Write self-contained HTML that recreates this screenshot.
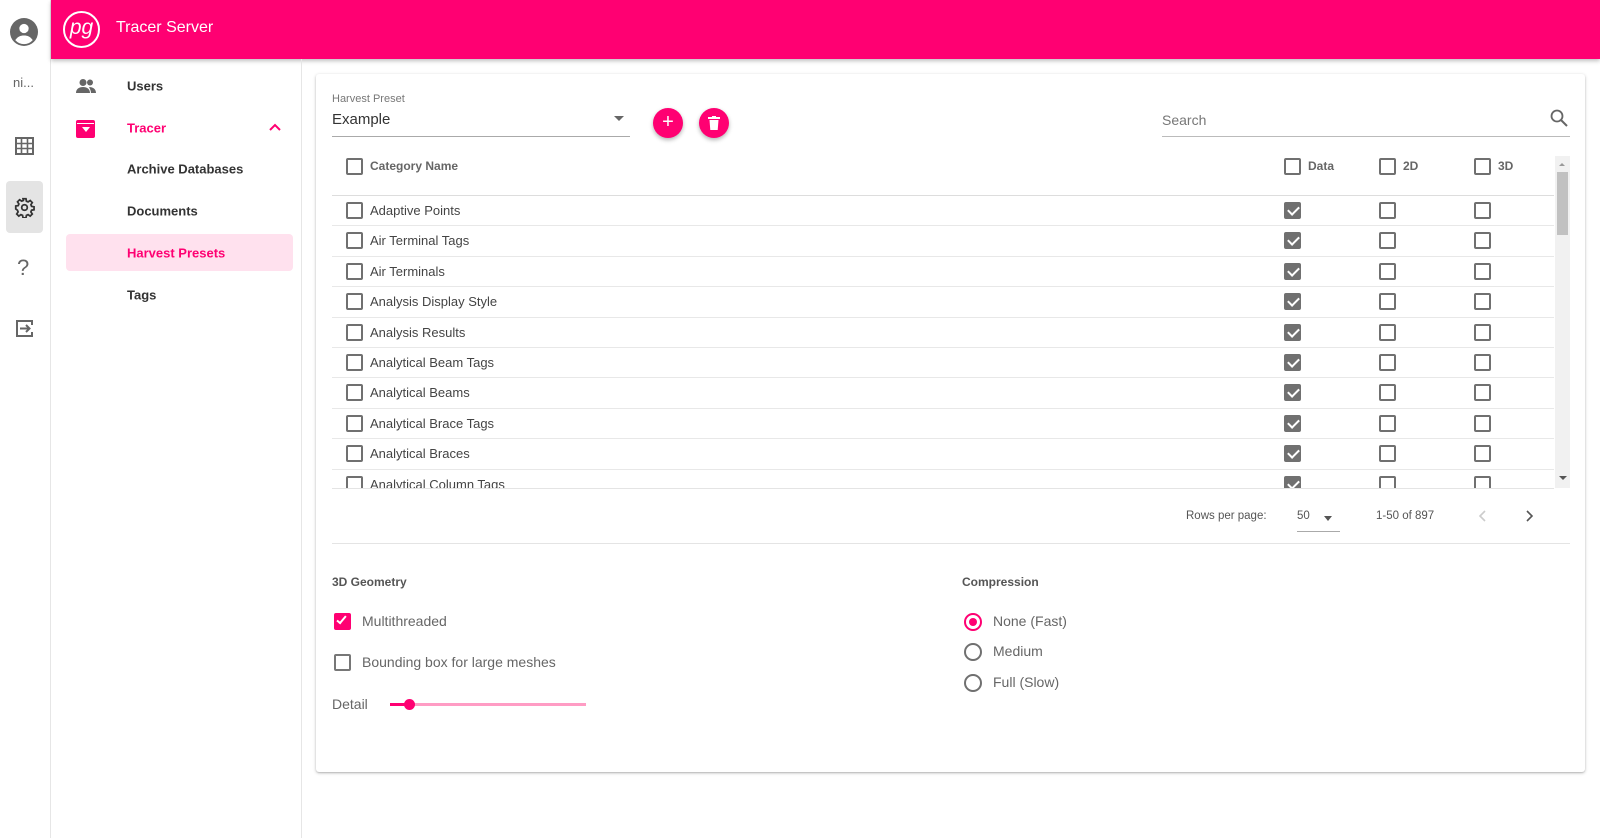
<!DOCTYPE html>
<html><head><meta charset="utf-8"><style>
*{box-sizing:border-box;margin:0;padding:0}
body{width:1600px;height:838px;overflow:hidden;background:#fff;font-family:"Liberation Sans",Arial,sans-serif;position:relative;color:#333}
.abs{position:absolute}
.top{left:51px;top:0;width:1549px;height:59px;background:#ff0072;box-shadow:0 2px 4px rgba(0,0,0,.25)}
.rail{left:0;top:0;width:51px;height:838px;background:#fff;border-right:1px solid #e6e6e6}
.side{left:51px;top:59px;width:251px;height:779px;border-right:1px solid #e6e6e6}
.nav{position:absolute;left:76px;font-size:13px;font-weight:bold;color:#333;transform:translateY(-50%)}
.card{left:316px;top:74px;width:1269px;height:698px;background:#fff;border-radius:3px;box-shadow:0 1px 3px rgba(0,0,0,.25),0 1px 1px rgba(0,0,0,.1)}
.cb{position:absolute;width:17px;height:17px;border:2px solid #707070;border-radius:2px;background:#fff}
.cb.on{background:#707070;border-color:#707070}
.cb.on:after{content:"";position:absolute;left:4px;top:0px;width:5px;height:9px;border:solid #fff;border-width:0 2px 2px 0;transform:rotate(45deg)}
.row{position:absolute;left:0;width:1222px;height:30.4px;border-bottom:1px solid #e8e8e8}
.row span{position:absolute;left:38px;top:7px;font-size:13px;color:#444}
.hd{font-size:12px;font-weight:bold;color:#666}
.radio{position:absolute;width:18px;height:18px;border:2px solid #707070;border-radius:50%}
</style></head><body>

<div class="abs rail">
 <svg class="abs" style="left:10px;top:18px" width="28" height="28" viewBox="0 0 24 24"><circle cx="12" cy="12" r="12" fill="#666"/><circle cx="12" cy="9" r="4" fill="#fff"/><path d="M4.5 19c2-3 4.5-4 7.5-4s5.5 1 7.5 4a10 10 0 0 1-15 0z" fill="#fff"/></svg>
 <div class="abs" style="left:13px;top:75px;font-size:13px;color:#666">ni...</div>
 <svg class="abs" style="left:15px;top:137px" width="19" height="18" viewBox="0 0 19 18"><rect x="1" y="1" width="17" height="16" fill="none" stroke="#666" stroke-width="2"/><path d="M1 6.5h17M1 11.5h17M6.5 1v16M12.5 1v16" stroke="#666" stroke-width="1.6"/></svg>
 <div class="abs" style="left:6px;top:181px;width:37px;height:52px;background:#e4e4e4;border-radius:4px"></div>
 <svg class="abs" style="left:14px;top:197px" width="21" height="21" viewBox="0 0 24 24"><path fill="none" stroke="#333" stroke-width="2" d="M10.3 2h3.4l.5 2.8 1.9.8 2.4-1.6 2.4 2.4-1.6 2.4.8 1.9 2.8.5v3.4l-2.8.5-.8 1.9 1.6 2.4-2.4 2.4-2.4-1.6-1.9.8-.5 2.8h-3.4l-.5-2.8-1.9-.8-2.4 1.6-2.4-2.4 1.6-2.4-.8-1.9L2 13.7v-3.4l2.8-.5.8-1.9L4 5.5l2.4-2.4 2.4 1.6 1.9-.8z"/><circle cx="12" cy="12" r="3.2" fill="none" stroke="#333" stroke-width="2"/></svg>
 <div class="abs" style="left:17px;top:255px;font-size:22px;color:#666">?</div>
 <svg class="abs" style="left:15px;top:319px" width="19" height="19" viewBox="0 0 19 19"><path d="M7 2H2v15h15v-4M17 6V2H2" fill="none" stroke="#666" stroke-width="2"/><path d="M5 9.5h9M11 6l3.5 3.5L11 13" fill="none" stroke="#666" stroke-width="2"/></svg>
</div>

<div class="abs top">
 <div class="abs" style="left:12px;top:11px;width:37px;height:37px;border:2px solid #fff;border-radius:50%;color:#fff;font-size:21px;font-style:italic;text-align:center;line-height:29px">pg</div>
 <div class="abs" style="left:65px;top:19px;color:#fff;font-size:16px">Tracer Server</div>
</div>

<div class="abs side">
 <svg class="abs" style="left:25px;top:19px" width="20" height="16" viewBox="0 0 20 16"><circle cx="7" cy="4.5" r="3.5" fill="#666"/><circle cx="14" cy="4.5" r="3" fill="#666"/><path d="M0 15c0-4 3-6 7-6s7 2 7 6zM13 9c4 0 7 2 7 6h-5c0-2-1-4-2-6z" fill="#666"/></svg>
 <div class="abs" style="left:25px;top:61px;width:19px;height:18px;background:#ff0072;border-radius:2px"><div style="position:absolute;left:6px;top:7px;border:4px solid transparent;border-top:5px solid #fff"></div><div style="position:absolute;left:1px;top:3px;width:17px;height:1px;background:#fff"></div></div>
 <div class="nav" style="top:27px">Users</div>
 <div class="nav" style="top:69px;color:#ff0072">Tracer</div>
 <svg class="abs" style="left:218px;top:64px" width="12" height="8" viewBox="0 0 12 8"><path d="M1 7l5-5 5 5" fill="none" stroke="#ff0072" stroke-width="2"/></svg>
 <div class="nav" style="top:110px">Archive Databases</div>
 <div class="nav" style="top:152px">Documents</div>
 <div class="abs" style="left:15px;top:175px;width:227px;height:37px;background:#ffe1ee;border-radius:4px"></div>
 <div class="nav" style="top:194px;color:#ff0072">Harvest Presets</div>
 <div class="nav" style="top:236px">Tags</div>
</div>

<div class="abs card">
 <div class="abs" style="left:16px;top:19px;font-size:11px;color:#777">Harvest Preset</div>
 <div class="abs" style="left:16px;top:37px;font-size:15px;color:#333">Example</div>
 <div class="abs" style="left:16px;top:62px;width:298px;height:1px;background:#aaa"></div>
 <div class="abs" style="left:298px;top:42px;border:5px solid transparent;border-top:5px solid #666"></div>
 <div class="abs" style="left:337px;top:34px;width:30px;height:30px;border-radius:50%;background:#ff0072;box-shadow:0 2px 4px rgba(0,0,0,.3);color:#fff;font-size:20px;text-align:center;line-height:29px">+</div>
 <div class="abs" style="left:383px;top:34px;width:30px;height:30px;border-radius:50%;background:#ff0072;box-shadow:0 2px 4px rgba(0,0,0,.3)">
  <svg style="position:absolute;left:9px;top:8px" width="12" height="14" viewBox="0 0 12 14"><rect x="0" y="1" width="12" height="2" fill="#fff"/><rect x="4" y="0" width="4" height="2" fill="#fff"/><path d="M1.5 4h9l-.8 10H2.3z" fill="#fff"/></svg>
 </div>
 <div class="abs" style="left:846px;top:38px;font-size:14px;color:#777">Search</div>
 <svg class="abs" style="left:1234px;top:35px" width="18" height="18" viewBox="0 0 18 18"><circle cx="7" cy="7" r="5.5" fill="none" stroke="#666" stroke-width="1.8"/><path d="M11 11l6 6" stroke="#666" stroke-width="2"/></svg>
 <div class="abs" style="left:846px;top:62px;width:408px;height:1px;background:#bbb"></div>

 <div class="abs" style="left:16px;top:82px;width:1238px;height:332px;overflow:hidden">
  <div class="cb" style="left:14px;top:2px"></div><div class="abs hd" style="left:38px;top:3px">Category Name</div>
  <div class="cb" style="left:952px;top:2px"></div><div class="abs hd" style="left:976px;top:3px">Data</div>
  <div class="cb" style="left:1047px;top:2px"></div><div class="abs hd" style="left:1071px;top:3px">2D</div>
  <div class="cb" style="left:1142px;top:2px"></div><div class="abs hd" style="left:1166px;top:3px">3D</div>
  <div class="abs" style="left:0;top:39px;width:1222px;height:1px;background:#ddd"></div>
  <div class="abs" style="left:1223px;top:0;width:15px;height:332px;background:#f1f1f1"></div>
  <div class="abs" style="left:1225px;top:16px;width:11px;height:63px;background:#c1c1c1"></div>
  <div class="abs" style="left:1227px;top:4px;border:3px solid transparent;border-bottom:3px solid #999"></div>
  <div class="abs" style="left:1227px;top:320px;border:4px solid transparent;border-top:4px solid #555"></div>
  <div class="abs" style="left:0;top:40px;width:1222px;height:292px">
   <div class="row" style="top:0"><div class="cb" style="left:14px;top:6px"></div><span>Adaptive Points</span><div class="cb on" style="left:952px;top:6px"></div><div class="cb" style="left:1047px;top:6px"></div><div class="cb" style="left:1142px;top:6px"></div></div>
   <div class="row" style="top:30.4px"><div class="cb" style="left:14px;top:6px"></div><span>Air Terminal Tags</span><div class="cb on" style="left:952px;top:6px"></div><div class="cb" style="left:1047px;top:6px"></div><div class="cb" style="left:1142px;top:6px"></div></div>
   <div class="row" style="top:60.8px"><div class="cb" style="left:14px;top:6px"></div><span>Air Terminals</span><div class="cb on" style="left:952px;top:6px"></div><div class="cb" style="left:1047px;top:6px"></div><div class="cb" style="left:1142px;top:6px"></div></div>
   <div class="row" style="top:91.2px"><div class="cb" style="left:14px;top:6px"></div><span>Analysis Display Style</span><div class="cb on" style="left:952px;top:6px"></div><div class="cb" style="left:1047px;top:6px"></div><div class="cb" style="left:1142px;top:6px"></div></div>
   <div class="row" style="top:121.6px"><div class="cb" style="left:14px;top:6px"></div><span>Analysis Results</span><div class="cb on" style="left:952px;top:6px"></div><div class="cb" style="left:1047px;top:6px"></div><div class="cb" style="left:1142px;top:6px"></div></div>
   <div class="row" style="top:152px"><div class="cb" style="left:14px;top:6px"></div><span>Analytical Beam Tags</span><div class="cb on" style="left:952px;top:6px"></div><div class="cb" style="left:1047px;top:6px"></div><div class="cb" style="left:1142px;top:6px"></div></div>
   <div class="row" style="top:182.4px"><div class="cb" style="left:14px;top:6px"></div><span>Analytical Beams</span><div class="cb on" style="left:952px;top:6px"></div><div class="cb" style="left:1047px;top:6px"></div><div class="cb" style="left:1142px;top:6px"></div></div>
   <div class="row" style="top:212.8px"><div class="cb" style="left:14px;top:6px"></div><span>Analytical Brace Tags</span><div class="cb on" style="left:952px;top:6px"></div><div class="cb" style="left:1047px;top:6px"></div><div class="cb" style="left:1142px;top:6px"></div></div>
   <div class="row" style="top:243.2px"><div class="cb" style="left:14px;top:6px"></div><span>Analytical Braces</span><div class="cb on" style="left:952px;top:6px"></div><div class="cb" style="left:1047px;top:6px"></div><div class="cb" style="left:1142px;top:6px"></div></div>
   <div class="row" style="top:273.6px"><div class="cb" style="left:14px;top:6px"></div><span>Analytical Column Tags</span><div class="cb on" style="left:952px;top:6px"></div><div class="cb" style="left:1047px;top:6px"></div><div class="cb" style="left:1142px;top:6px"></div></div>
  </div>
 </div>
 <div class="abs" style="left:16px;top:414px;width:1222px;height:1px;background:#e4e4e4"></div>

 <div class="abs" style="left:870px;top:436px;font-size:11.5px;color:#555">Rows per page:</div>
 <div class="abs" style="left:981px;top:436px;font-size:11.5px;color:#555">50</div>
 <div class="abs" style="left:1008px;top:442px;border:4px solid transparent;border-top:5px solid #555"></div>
 <div class="abs" style="left:981px;top:457px;width:43px;height:1px;background:#aaa"></div>
 <div class="abs" style="left:1060px;top:436px;font-size:11.5px;color:#555">1-50 of 897</div>
 <svg class="abs" style="left:1162px;top:436px" width="8" height="12" viewBox="0 0 8 12"><path d="M7 1L2 6l5 5" fill="none" stroke="#ccc" stroke-width="1.6"/></svg>
 <svg class="abs" style="left:1210px;top:436px" width="8" height="12" viewBox="0 0 8 12"><path d="M1 1l5 5-5 5" fill="none" stroke="#555" stroke-width="1.6"/></svg>
 <div class="abs" style="left:16px;top:469px;width:1238px;height:1px;background:#e4e4e4"></div>

 <div class="abs" style="left:16px;top:501px;font-size:12px;font-weight:bold;color:#555">3D Geometry</div>
 <div class="abs" style="left:18px;top:539px;width:17px;height:17px;background:#ff0072;border-radius:2px"><div style="position:absolute;left:5px;top:1px;width:5px;height:10px;border:solid #fff;border-width:0 2px 2px 0;transform:rotate(40deg)"></div></div>
 <div class="abs" style="left:46px;top:539px;font-size:14px;color:#666">Multithreaded</div>
 <div class="cb" style="left:18px;top:580px;border-color:#777"></div>
 <div class="abs" style="left:46px;top:580px;font-size:14px;color:#666">Bounding box for large meshes</div>
 <div class="abs" style="left:16px;top:622px;font-size:14px;color:#666">Detail</div>
 <div class="abs" style="left:74px;top:629px;width:196px;height:3px;background:#ff9cc4"></div>
 <div class="abs" style="left:74px;top:629px;width:20px;height:3px;background:#ff0072"></div>
 <div class="abs" style="left:88px;top:625px;width:11px;height:11px;border-radius:50%;background:#ff0072"></div>

 <div class="abs" style="left:646px;top:501px;font-size:12px;font-weight:bold;color:#555">Compression</div>
 <div class="radio" style="left:648px;top:539px;border-color:#ff0072"><div style="position:absolute;left:3px;top:3px;width:8px;height:8px;border-radius:50%;background:#ff0072"></div></div>
 <div class="abs" style="left:677px;top:539px;font-size:14px;color:#666">None (Fast)</div>
 <div class="radio" style="left:648px;top:569px"></div>
 <div class="abs" style="left:677px;top:569px;font-size:14px;color:#666">Medium</div>
 <div class="radio" style="left:648px;top:600px"></div>
 <div class="abs" style="left:677px;top:600px;font-size:14px;color:#666">Full (Slow)</div>
</div>
</body></html>
